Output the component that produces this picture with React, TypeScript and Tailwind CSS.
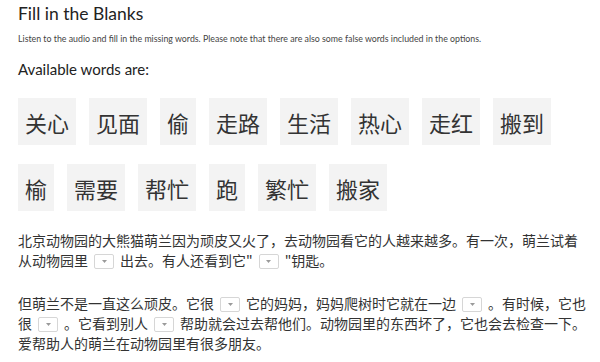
import React from 'react';

const words = [
  '关心', '见面', '偷', '走路', '生活', '热心', '走红', '搬到',
  '榆', '需要', '帮忙', '跑', '繁忙', '搬家',
];

const latin = "font-['Lato','Liberation_Sans',sans-serif]";
const cjk = "font-['Noto_Sans_CJK_SC','Noto_Sans',sans-serif]";

function Blank() {
  return (
    <span className="mx-[6px] inline-block h-[15px] w-[20px] overflow-hidden rounded-[2px] border border-[#d6d6d6] bg-white align-[-3px]">
      <svg
        width="5"
        height="3"
        viewBox="0 0 5 3"
        className="mx-auto mt-[5px] block"
      >
        <path d="M0 0 L5 0 L2.5 3 Z" fill="#9a9a9a" />
      </svg>
    </span>
  );
}

export default function App() {
  return (
    <div className="min-h-[362px] bg-white pl-[18px] pr-[11px] pt-[2px] text-[#333]">
      <h1 className={`${latin} text-[17.5px] leading-[24px] text-[#222]`}>
        Fill in the Blanks
      </h1>
      <p className={`${latin} mt-[7px] text-[8.8px] leading-[12px] text-[#444]`}>
        Listen to the audio and fill in the missing words. Please note that
        there are also some false words included in the options.
      </p>
      <h2 className={`${latin} mt-[14px] text-[15px] leading-[20px] text-[#222]`}>
        Available words are:
      </h2>

      <div className="mt-[19px] flex flex-wrap gap-x-[13px] gap-y-[19px]">
        {words.map((w) => (
          <div
            key={w}
            className={`${cjk} flex h-[47px] items-center bg-[#f3f3f3] px-[7px] text-[22px] leading-none text-[#333]`}
          >
            {w}
          </div>
        ))}
      </div>

      <div className={`${cjk} mt-[19px] text-[14px] leading-[20px] text-[#333]`}>
        <p>
          北京动物园的大熊猫萌兰因为顽皮又火了，去动物园看它的人越来越多。有一次，萌兰试着从动物园里
          <Blank />
          出去。有人还看到它"
          <Blank />
          "钥匙。
        </p>
        <p className="mt-[23px]">
          但萌兰不是一直这么顽皮。它很
          <Blank />
          它的妈妈，妈妈爬树时它就在一边
          <Blank />
          。有时候，它也很
          <Blank />
          。它看到别人
          <Blank />
          帮助就会过去帮他们。动物园里的东西坏了，它也会去检查一下。爱帮助人的萌兰在动物园里有很多朋友。
        </p>
      </div>
    </div>
  );
}
